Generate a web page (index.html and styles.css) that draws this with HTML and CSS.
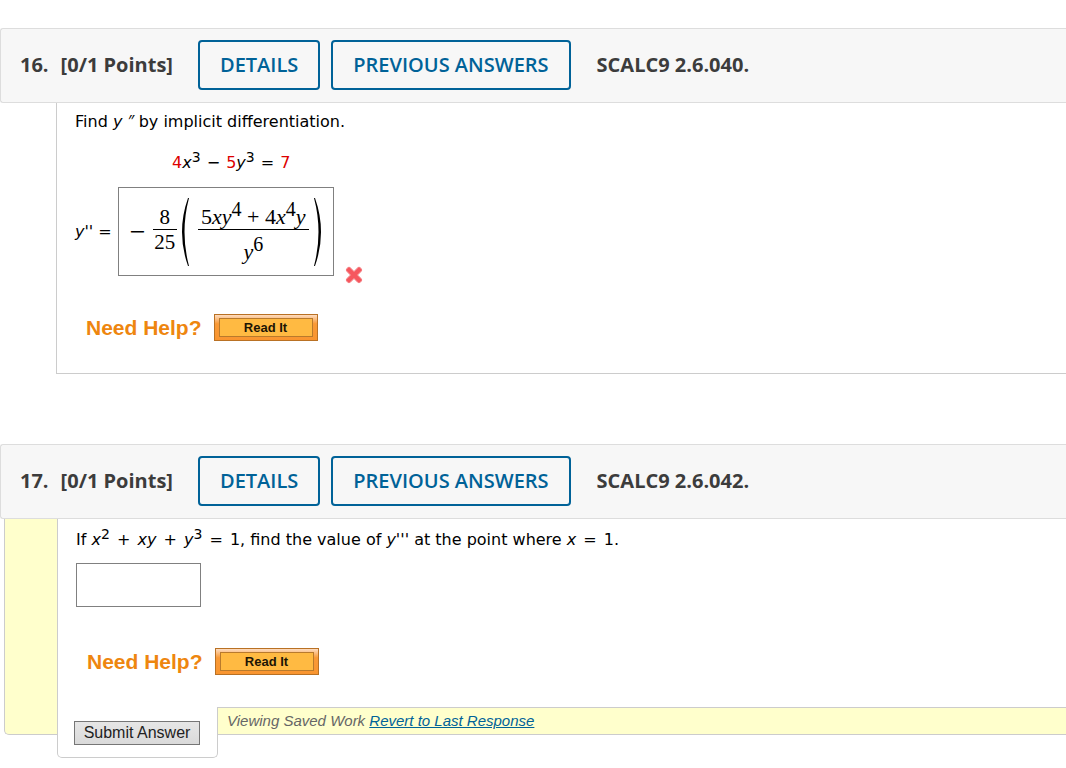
FILE: index.html
```html
<!DOCTYPE html>
<html lang="en">
<head>
<meta charset="utf-8">
<title>Assignment</title>
<link rel="stylesheet" href="styles.css">
</head>
<body>
<main class="assignment">
  <section class="question">
    <header class="question-bar">
      <h2 class="number">16.</h2>
      <span class="points">[0/1 Points]</span>
      <div class="actions">
        <button class="outline" type="button">DETAILS</button>
        <button class="outline" type="button">PREVIOUS ANSWERS</button>
      </div>
      <span class="source">SCALC9 2.6.040.</span>
    </header>
    <div class="panel">
      <p class="prompt">Find <i>y</i> <span class="prime">″</span> by implicit differentiation.</p>
      <p class="equation"><span class="value">4</span><i>x</i><sup>3</sup> <span class="op">−</span> <span class="value">5</span><i>y</i><sup>3</sup> <span class="op">=</span> <span class="value">7</span></p>
      <div class="answer">
        <span class="answer-label"><i>y</i>'' =</span>
        <div class="answer-box">
          <span class="minus">−</span>
          <span class="fraction small"><span class="top">8</span><span class="bottom">25</span></span>
          <svg class="paren" viewBox="0 0 8 68" aria-hidden="true"><path d="M7 0Q-5 34 7 68L8 68Q-1 34 8 0Z"/></svg>
          <span class="fraction large">
            <span class="top">5<i>xy</i><sup>4</sup> + 4<i>x</i><sup>4</sup><i>y</i></span>
            <span class="bottom"><i>y</i><sup>6</sup></span>
          </span>
          <svg class="paren" viewBox="0 0 8 68" aria-hidden="true"><path d="M1 0Q13 34 1 68L0 68Q9 34 0 0Z"/></svg>
        </div>
        <svg class="wrong" viewBox="0 0 18 18" role="img" aria-label="Incorrect">
          <path d="M4 4L14 14M14 4L4 14" stroke="#f58d91" stroke-width="6" stroke-linecap="round"/>
          <path d="M4 4L14 14M14 4L4 14" stroke="#f6575e" stroke-width="4" stroke-linecap="square"/>
        </svg>
      </div>
      <div class="help"><strong>Need Help?</strong><button class="read" type="button">Read It</button></div>
    </div>
  </section>

  <section class="question">
    <header class="question-bar">
      <h2 class="number">17.</h2>
      <span class="points">[0/1 Points]</span>
      <div class="actions">
        <button class="outline" type="button">DETAILS</button>
        <button class="outline" type="button">PREVIOUS ANSWERS</button>
      </div>
      <span class="source">SCALC9 2.6.042.</span>
    </header>
    <div class="saved">
      <div class="saved-panel">
        <label class="prompt" for="answer-17">If <i>x</i><sup>2</sup> <span class="op">+</span> <i>xy</i> <span class="op">+</span> <i>y</i><sup>3</sup> <span class="op">=</span> 1, find the value of <i>y</i>''' at the point where <i>x</i> <span class="op">=</span> 1.</label>
        <input class="entry" id="answer-17" type="text">
        <div class="help"><strong>Need Help?</strong><button class="read" type="button">Read It</button></div>
      </div>
      <footer class="saved-footer">
        <div class="submit-tab"><button class="submit" type="button">Submit Answer</button></div>
        <p class="status">Viewing Saved Work <a href="#revert">Revert to Last Response</a></p>
      </footer>
    </div>
  </section>
</main>
</body>
</html>
```
FILE: styles.css
```css
* { box-sizing: border-box; }

body {
  margin: 0;
  background: #fff;
  color: #000;
  font: 16px/24px "DejaVu Sans", Verdana, sans-serif;
}

p, h2 { margin: 0; }

.assignment {
  display: flex;
  flex-direction: column;
  gap: 70px;
  min-height: 100vh;
  padding: 28px 0 8px;
}

.question-bar {
  display: flex;
  align-items: center;
  padding: 11px 19px 12px;
  border: 1px solid #ddd;
  border-right: 0;
  border-radius: 3px 0 0 3px;
  background: #f7f7f7;
  color: #3c3c3c;
  font: bold 20px/26px "Open Sans", sans-serif;
  white-space: nowrap;
}

.number { font: inherit; }
.points { margin-left: 12px; }
.actions { display: flex; gap: 11px; margin: 0 26px 0 25px; }

.outline {
  height: 50px;
  padding: 0 20px;
  border: 2px solid #006298;
  border-radius: 4px;
  background: transparent;
  color: #006298;
  font: 600 20px/26px "Open Sans", sans-serif;
}

.panel {
  margin-left: 56px;
  padding: 6px 18px 32px;
  border-left: 1px solid #ccc;
  border-bottom: 1px solid #ccc;
}

sup {
  font-size: 14px;
  line-height: 0;
  vertical-align: 6px;
}

.prime { font: italic 16px/24px "Open Sans", sans-serif; }
.op { margin: 0 2px; }
.equation { margin: 17px 0 0 97px; }
.equation .op { margin: 0 1px; }
.value { color: #d00; }

.answer {
  display: flex;
  align-items: flex-start;
  margin-top: 12px;
}

.answer-label { margin: 33px 6px 0 0; }

.answer-box {
  display: flex;
  align-items: center;
  height: 89px;
  padding: 0 11px;
  border: 1px solid #808080;
  font: 21px/24px "Liberation Serif", serif;
}

.minus { width: 23px; font-size: 28px; }

.fraction {
  display: flex;
  flex-direction: column;
  text-align: center;
  white-space: nowrap;
}

.fraction .top { border-bottom: 1px solid #000; }
.small { width: 24px; padding-bottom: 4px; }
.large { width: 111px; margin: 0 5px 0 9px; font-size: 22px; }
.large .bottom { padding-top: 8px; line-height: 28px; }
.large .top { padding-top: 8px; }
.fraction sup { font-size: 20px; vertical-align: 8px; }
.paren { width: 8px; height: 68px; margin-left: 4px; }
.large + .paren { margin-left: 0; }

.wrong {
  width: 18px;
  height: 18px;
  margin: 79px 0 0 11px;
  fill: none;
}

.help {
  display: flex;
  align-items: center;
  gap: 12px;
  margin: 30px 0 0 11px;
}

.help strong {
  color: #ee860f;
  font: bold 21px/26px "Liberation Sans", Arial, sans-serif;
}

.read {
  position: relative;
  isolation: isolate;
  width: 104px;
  height: 27px;
  padding: 0;
  border: 1px solid #b97124;
  background: linear-gradient(#fddcc0, #f99a37 35%, #f99530);
  color: #1c1505;
  font: bold 13px/17px "Liberation Sans", Arial, sans-serif;
}

.read::before {
  content: "";
  position: absolute;
  inset: 3px 4px;
  z-index: -1;
  border: 1px solid #b97a2c;
  background: #ffba42;
}

.saved {
  margin: 0 0 22px 4px;
  padding-left: 52px;
  border-left: 1px solid #ccc;
  border-bottom: 1px solid #ccc;
  border-radius: 0 0 0 5px;
  background: #ffc;
}

.saved-panel {
  padding: 9px 18px 32px;
  border-left: 1px solid #ccc;
  background: #fff;
}

.saved-panel .prompt { display: block; }

.entry {
  display: block;
  width: 125px;
  height: 44px;
  margin-top: 11px;
  border: 1px solid #808080;
  background: #fff;
  font: inherit;
}

.saved-panel .help { margin-top: 41px; }

.saved-footer {
  display: flex;
  align-items: flex-start;
  height: 27px;
}

.submit-tab {
  padding: 14px 17px 12px 16px;
  border: 1px solid #ccc;
  border-top: 0;
  border-radius: 0 0 5px 5px;
  background: #fff;
}

.submit {
  display: block;
  width: 126px;
  height: 24px;
  padding: 0;
  border: 1px solid #767676;
  background: linear-gradient(#e6e6e6, #dadada);
  color: #222;
  font: 16px/20px "Liberation Sans", Arial, sans-serif;
}

.status {
  flex: 1;
  padding: 0 9px;
  border-top: 1px solid #ccc;
  color: #666;
  font: italic 15px/26px "Liberation Sans", Arial, sans-serif;
}

.status a { color: #006298; }
```
